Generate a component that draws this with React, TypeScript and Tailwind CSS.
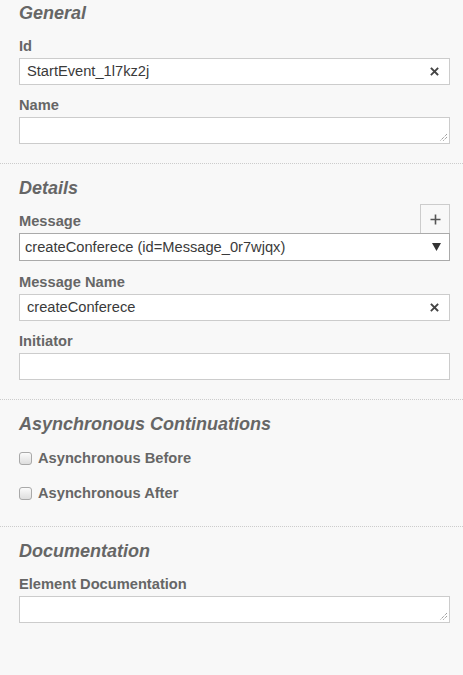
import React from "react";

const font = { fontFamily: '"Liberation Sans", Arial, Helvetica, sans-serif' };

function Heading({ children }: { children: React.ReactNode }) {
  return (
    <div className="h-[20px] text-[18px] leading-[20px] font-bold italic text-[#666]">{children}</div>
  );
}

function Label({ children, className = "" }: { children: React.ReactNode; className?: string }) {
  return (
    <div className={"h-[17px] text-[14.67px] leading-[17px] font-bold text-[#666] " + className}>{children}</div>
  );
}

function ClearIcon() {
  return (
    <svg width="9" height="9" viewBox="0 0 9 9" className="shrink-0">
      <path d="M1.5 1.5 L7.5 7.5 M7.5 1.5 L1.5 7.5" stroke="#444" strokeWidth="1.8" strokeLinecap="square" />
    </svg>
  );
}

function TextInput({ value, className = "" }: { value?: string; className?: string }) {
  return (
    <div
      className={
        "flex h-[27px] w-full items-center justify-between border border-[#ccc] bg-white pl-[7px] pr-[10px] " + className
      }
    >
      <span className="text-[14.67px] leading-[17px] text-[#3a3a3a]">{value}</span>
      {value ? <ClearIcon /> : null}
    </div>
  );
}

function TextArea({ className = "" }: { className?: string }) {
  return (
    <div className={"relative h-[27px] w-full border border-[#ccc] bg-white " + className}>
      <svg width="10" height="10" viewBox="0 0 10 10" className="absolute bottom-[1px] right-[1px]">
        <path d="M9 2 L2 9 M9 5 L5 9" stroke="#777" strokeWidth="1" strokeDasharray="1 1" />
      </svg>
    </div>
  );
}

function Checkbox({ label, className = "" }: { label: string; className?: string }) {
  return (
    <div className={"flex h-[17px] items-center " + className}>
      <div className="h-[13px] w-[13px] rounded-[3px] border border-[#a9a9a9] bg-gradient-to-b from-[#fbfbfb] to-[#dedede]" />
      <span className="ml-[6px] text-[14.67px] leading-[17px] font-bold text-[#666]">{label}</span>
    </div>
  );
}

export default function App() {
  return (
    <div className="min-h-screen w-full bg-[#f8f8f8]" style={font}>
      {/* General */}
      <div className="border-b border-dotted border-[#ccc] pb-[19px] pl-[19px] pr-[13px] pt-[3px]">
        <Heading>General</Heading>
        <Label className="mt-[15px]">Id</Label>
        <TextInput value="StartEvent_1l7kz2j" className="mt-[3px]" />
        <Label className="mt-[12px]">Name</Label>
        <TextArea className="mt-[3px]" />
      </div>

      {/* Details */}
      <div className="border-b border-dotted border-[#ccc] pb-[19px] pl-[19px] pr-[13px] pt-[14px]">
        <Heading>Details</Heading>
        <div className="mt-[6px] flex items-end justify-between">
          <Label className="mb-[3px]">Message</Label>
          <div className="flex h-[29px] w-[30px] items-center justify-center border border-b-0 border-[#ccc] bg-[#f8f8f8]">
            <svg width="11" height="11" viewBox="0 0 11 11">
              <path d="M5.5 0.5 V10.5 M0.5 5.5 H10.5" stroke="#555" strokeWidth="1.6" />
            </svg>
          </div>
        </div>
        <div className="flex h-[28px] w-full items-center justify-between border border-[#aaa] bg-white pl-[5px] pr-[8px]">
          <span className="text-[14.67px] leading-[17px] text-[#3a3a3a]">createConferece (id=Message_0r7wjqx)</span>
          <svg width="9" height="8" viewBox="0 0 9 8">
            <path d="M0 0 H9 L4.5 8 Z" fill="#333" />
          </svg>
        </div>
        <Label className="mt-[13px]">Message Name</Label>
        <TextInput value="createConferece" className="mt-[3px]" />
        <Label className="mt-[12px]">Initiator</Label>
        <TextInput className="mt-[3px]" />
      </div>

      {/* Asynchronous Continuations */}
      <div className="border-b border-dotted border-[#ccc] pb-[24px] pl-[19px] pr-[13px] pt-[14px]">
        <Heading>Asynchronous Continuations</Heading>
        <Checkbox label="Asynchronous Before" className="mt-[16px]" />
        <Checkbox label="Asynchronous After" className="mt-[18px]" />
      </div>

      {/* Documentation */}
      <div className="pb-[20px] pl-[19px] pr-[13px] pt-[14px]">
        <Heading>Documentation</Heading>
        <Label className="mt-[15px]">Element Documentation</Label>
        <TextArea className="mt-[3px]" />
      </div>
    </div>
  );
}
